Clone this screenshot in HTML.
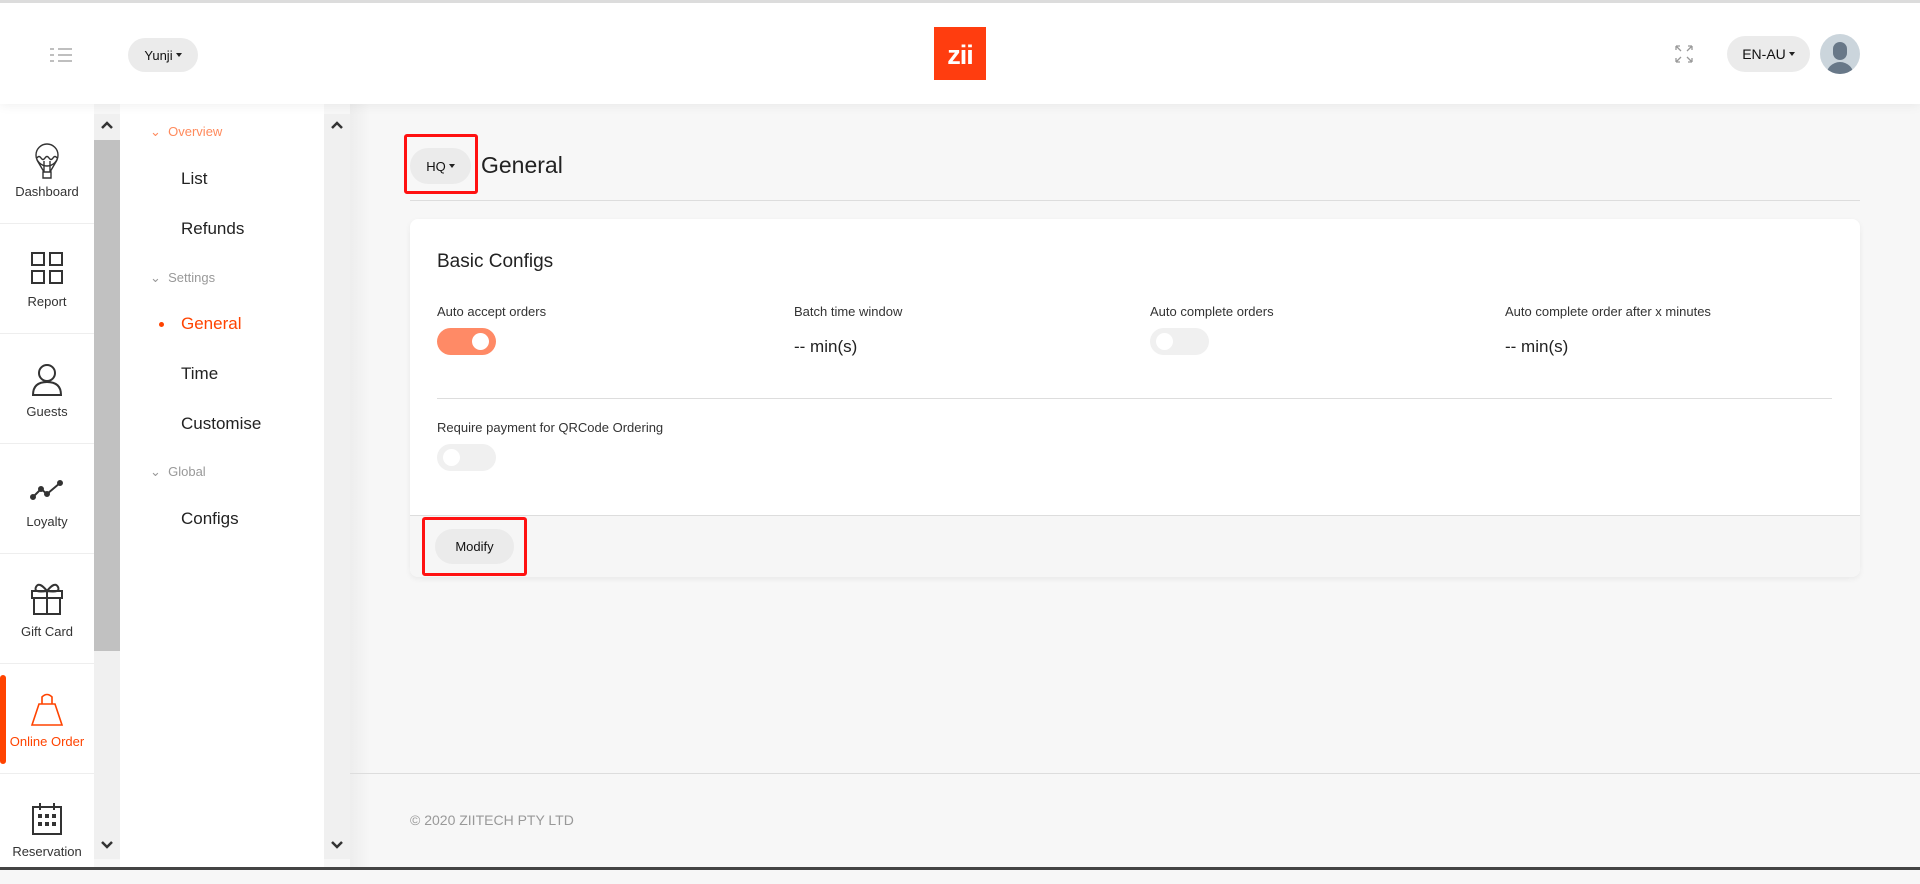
<!DOCTYPE html>
<html><head><meta charset="utf-8"><style>
*{box-sizing:border-box;margin:0;padding:0}
body{width:1920px;height:870px;overflow:hidden;background:#f7f7f7;font-family:"Liberation Sans",sans-serif;color:#222;position:relative}
.abs{position:absolute}
.hdr{left:0;top:0;width:1920px;height:104px;background:#fff;border-top:3px solid #dcdcdc;box-shadow:0 2px 10px rgba(0,0,0,.06);z-index:3}
.pill{background:#ebebeb;border-radius:20px;font-size:13px;display:flex;align-items:center;justify-content:center;color:#111}
.caret{display:inline-block;border-left:3px solid transparent;border-right:3px solid transparent;border-top:4px solid #222;margin-left:3px;vertical-align:middle}
.side1{left:0;top:104px;width:94px;height:764px;background:#fff}
.sb{background:#f0f0f0}
.item{position:absolute;left:0;width:94px;height:110px;border-bottom:1px solid #eee;text-align:center;font-size:13px;color:#333}
.item svg{position:absolute;left:30px;top:28px}
.item span{position:absolute;left:0;right:0;top:70px}
.side2{left:120px;top:104px;width:204px;height:764px;background:#fff}
.sub{position:absolute;font-size:17px;color:#222}
.grp{position:absolute;font-size:13px;color:#999}
.card{left:410px;top:219px;width:1450px;height:358px;background:#fff;border-radius:8px;box-shadow:0 2px 6px rgba(0,0,0,.06);overflow:hidden}
.lbl{position:absolute;font-size:13px;color:#333}
.val{position:absolute;font-size:17px;color:#222}
.tg{position:absolute;width:59px;height:27px;border-radius:14px;background:#f0f0f0}
.tg i{position:absolute;top:5px;left:6px;width:17px;height:17px;border-radius:50%;background:#fff}
.red{border:3px solid #f11;border-radius:3px}
</style></head><body>
<div class="abs hdr">
  <svg class="abs" style="left:50px;top:44px" width="22" height="16" viewBox="0 0 22 16" stroke="#999" stroke-width="1.2"><path d="M0 2h4M8 2h14M0 8h4M8 8h14M0 14h4M8 14h14"/></svg>
  <div class="abs pill" style="left:128px;top:35px;width:70px;height:34px">Yunji<span class="caret"></span></div>
  <div class="abs" style="left:934px;top:24px;width:52px;height:53px;background:#ff3d0f;color:#fff;font-weight:bold;font-size:27px;text-align:center;line-height:56px;letter-spacing:-1px">zii</div>
  <svg class="abs" style="left:1675px;top:42px" width="18" height="18" viewBox="0 0 18 18" stroke="#999" stroke-width="1.3" fill="none"><path d="M1 1l5 5M1 1h4M1 1v4M17 1l-5 5M17 1h-4M17 1v4M1 17l5-5M1 17h4M1 17v-4M17 17l-5-5M17 17h-4M17 17v-4"/></svg>
  <div class="abs pill" style="left:1727px;top:33px;width:83px;height:36px;font-size:14px">EN-AU<span class="caret"></span></div>
  <div class="abs" style="left:1820px;top:31px;width:40px;height:40px;border-radius:50%;background:#cbd5dc;overflow:hidden">
    <div class="abs" style="left:13px;top:8px;width:14px;height:18px;border-radius:7px;background:#687888"></div>
    <div class="abs" style="left:6px;top:28px;width:28px;height:20px;border-radius:14px 14px 0 0;background:#687888"></div>
  </div>
</div>
<div class="abs side1">
  <div class="item" style="top:10px"><svg width="34" height="40" viewBox="0 0 34 40" fill="none" stroke="#333" stroke-width="1.4"><circle cx="17" cy="13" r="11"/><path d="M7 16q2-3 4 0t4 0 4 0 4 0 4 0M7 18l7 12M27 18l-7 12M14 19v11M20 19v11M13 30h8v6h-8z"/></svg><span>Dashboard</span></div>
  <div class="item" style="top:120px"><svg width="34" height="34" viewBox="0 0 34 34" fill="none" stroke="#333" stroke-width="2"><rect x="2" y="1" width="12" height="12"/><rect x="20" y="1" width="12" height="12"/><rect x="2" y="19" width="12" height="12"/><rect x="20" y="19" width="12" height="12"/></svg><span>Report</span></div>
  <div class="item" style="top:230px"><svg width="34" height="34" viewBox="0 0 34 34" fill="none" stroke="#333" stroke-width="2"><circle cx="17" cy="11" r="8"/><path d="M3 33q0-13 14-13t14 13z"/></svg><span>Guests</span></div>
  <div class="item" style="top:340px"><svg width="34" height="34" viewBox="0 0 34 34" fill="none" stroke="#333" stroke-width="2"><path d="M3 25l8-8 6 5 13-11"/><circle cx="3" cy="25" r="2" fill="#333"/><circle cx="11" cy="17" r="2" fill="#333"/><circle cx="17" cy="22" r="2" fill="#333"/><circle cx="30" cy="11" r="2" fill="#333"/></svg><span>Loyalty</span></div>
  <div class="item" style="top:450px"><svg width="34" height="34" viewBox="0 0 34 34" fill="none" stroke="#333" stroke-width="2"><rect x="2" y="9" width="30" height="7"/><rect x="4" y="16" width="26" height="16"/><path d="M17 9v23M17 9q-8-10-11-4t11 4M17 9q8-10 11-4t-11 4"/></svg><span>Gift Card</span></div>
  <div class="item" style="top:560px;color:#ff4300"><div class="abs" style="left:0;top:11px;width:6px;height:89px;background:#ff4300;border-radius:3px"></div><svg width="34" height="36" viewBox="0 0 34 36" fill="none" stroke="#ff4300" stroke-width="1.6"><path d="M2 33L9 12h16l7 21zM12 12V5q5-5 10 0v7"/></svg><span>Online Order</span></div>
  <div class="item" style="top:670px;border:0"><svg width="34" height="34" viewBox="0 0 34 34" fill="none" stroke="#333" stroke-width="2"><rect x="3" y="5" width="28" height="27"/><path d="M10 1v7M24 1v7" /><g fill="#333" stroke="none"><rect x="8" y="12" width="4" height="4"/><rect x="15" y="12" width="4" height="4"/><rect x="22" y="12" width="4" height="4"/><rect x="8" y="20" width="4" height="4"/><rect x="15" y="20" width="4" height="4"/><rect x="22" y="20" width="4" height="4"/></g></svg><span>Reservation</span></div>
</div>
<div class="abs sb" style="left:94px;top:114px;width:26px;height:745px"></div>
<div class="abs" style="left:94px;top:140px;width:26px;height:511px;background:#c1c1c1"></div>
<svg class="abs" style="left:100px;top:120px" width="14" height="10" viewBox="0 0 14 10" fill="none" stroke="#333" stroke-width="2.5"><path d="M2 8l5-5 5 5"/></svg>
<svg class="abs" style="left:100px;top:840px" width="14" height="10" viewBox="0 0 14 10" fill="none" stroke="#333" stroke-width="2.5"><path d="M2 2l5 5 5-5"/></svg>
<div class="abs side2">
  <div class="grp" style="left:30px;top:20px;color:#ff8a5c"><span style="color:#ff8a5c">&#8964;</span>&nbsp; Overview</div>
  <div class="sub" style="left:61px;top:65px">List</div>
  <div class="sub" style="left:61px;top:115px">Refunds</div>
  <div class="grp" style="left:30px;top:166px">&#8964;&nbsp; Settings</div>
  <div class="abs" style="left:39px;top:218px;width:5px;height:5px;border-radius:50%;background:#ff4300"></div>
  <div class="sub" style="left:61px;top:210px;color:#ff4300">General</div>
  <div class="sub" style="left:61px;top:260px">Time</div>
  <div class="sub" style="left:61px;top:310px">Customise</div>
  <div class="grp" style="left:30px;top:360px">&#8964;&nbsp; Global</div>
  <div class="sub" style="left:61px;top:405px">Configs</div>
</div>
<div class="abs sb" style="left:324px;top:114px;width:26px;height:745px"></div>
<svg class="abs" style="left:330px;top:120px" width="14" height="10" viewBox="0 0 14 10" fill="none" stroke="#333" stroke-width="2.5"><path d="M2 8l5-5 5 5"/></svg>
<svg class="abs" style="left:330px;top:840px" width="14" height="10" viewBox="0 0 14 10" fill="none" stroke="#333" stroke-width="2.5"><path d="M2 2l5 5 5-5"/></svg>
<div class="abs" style="left:350px;top:104px;width:20px;height:764px;background:linear-gradient(90deg,rgba(0,0,0,.04),rgba(0,0,0,0))"></div>

<div class="abs pill" style="left:410px;top:148px;width:61px;height:36px">HQ<span class="caret"></span></div>
<div class="abs red" style="left:404px;top:134px;width:74px;height:60px"></div>
<div class="abs" style="left:481px;top:152px;font-size:23px;color:#222">General</div>
<div class="abs" style="left:410px;top:200px;width:1450px;height:1px;background:#ddd"></div>
<div class="abs card">
  <div class="abs" style="left:27px;top:32px;font-size:19px">Basic Configs</div>
  <div class="lbl" style="left:27px;top:85px">Auto accept orders</div>
  <div class="tg" style="left:27px;top:109px;background:#ff8a66"><i style="left:35px"></i></div>
  <div class="lbl" style="left:384px;top:85px">Batch time window</div>
  <div class="val" style="left:384px;top:118px">-- min(s)</div>
  <div class="lbl" style="left:740px;top:85px">Auto complete orders</div>
  <div class="tg" style="left:740px;top:109px"><i></i></div>
  <div class="lbl" style="left:1095px;top:85px">Auto complete order after x minutes</div>
  <div class="val" style="left:1095px;top:118px">-- min(s)</div>
  <div class="abs" style="left:27px;top:179px;width:1395px;height:1px;background:#ddd"></div>
  <div class="lbl" style="left:27px;top:201px">Require payment for QRCode Ordering</div>
  <div class="tg" style="left:27px;top:225px"><i></i></div>
  <div class="abs" style="left:0;top:296px;width:1450px;height:62px;background:#f6f6f6;border-top:1px solid #ddd"></div>
  <div class="abs pill" style="left:25px;top:310px;width:79px;height:35px">Modify</div>
</div>
<div class="abs red" style="left:422px;top:517px;width:105px;height:59px"></div>
<div class="abs" style="left:350px;top:773px;width:1570px;height:1px;background:#ddd"></div>
<div class="abs" style="left:410px;top:812px;font-size:14px;color:#999">© 2020 ZIITECH PTY LTD</div>
<div class="abs" style="left:0;top:867px;width:1920px;height:3px;background:#444"></div>
</body></html>
